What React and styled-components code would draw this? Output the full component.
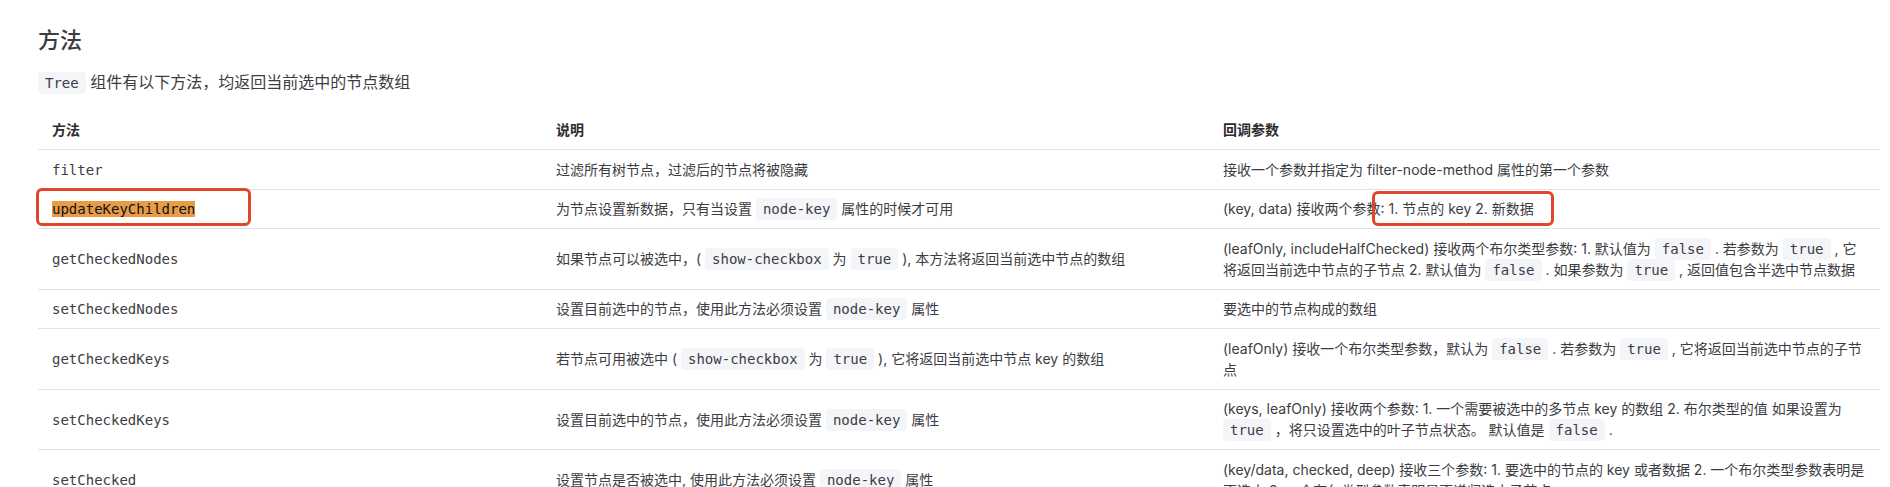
import React from 'react'
import styled, { createGlobalStyle } from 'styled-components'

const GlobalStyle = createGlobalStyle`
  html, body {
    margin: 0;
    padding: 0;
    background: #ffffff;
  }
  body {
    font-family: Inter, "Noto Sans CJK SC", sans-serif;
    color: #3c3c43;
  }
`

const Page = styled.div`
  position: relative;
  padding: 24px 10px 0 38px;
  height: 487px;
  box-sizing: border-box;
  overflow: hidden;
`

const Title = styled.h2`
  margin: 0;
  font-size: 22px;
  line-height: 32px;
  font-weight: 500;
  color: #3c3c43;
`

const Lead = styled.p`
  margin: 14px 0 0;
  font-size: 16px;
  line-height: 24px;
`

const Code = styled.code`
  font-family: "DejaVu Sans Mono", "Liberation Mono", monospace;
  font-size: 14px;
  line-height: 1;
  background: #f4f5f8;
  color: #3c3c43;
  border-radius: 4px;
  padding: 3px 7px;
`

const Table = styled.table`
  margin-top: 16px;
  width: 1842px;
  border-collapse: collapse;
  table-layout: fixed;
  font-size: 14px;
`

const Th = styled.th`
  text-align: left;
  font-weight: 600;
  color: #2c2c30;
  padding: 9px 14px;
  line-height: 21px;
  border-bottom: 1px solid #e0e2e8;
`

const Td = styled.td`
  padding: 8.75px 14px;
  line-height: 21px;
  vertical-align: middle;
  border-bottom: 1px solid #e0e2e8;
`

const Method = styled.span`
  font-family: "DejaVu Sans Mono", "Liberation Mono", monospace;
  font-size: 14px;
  line-height: 1;
  color: ${({ $marked }) => ($marked ? '#111111' : '#3c3c43')};
  background: ${({ $marked }) => ($marked ? '#e99c48' : 'transparent')};
`

const Callout = styled.div`
  position: absolute;
  border: 3px solid #e0462a;
  border-radius: 6px;
  box-sizing: border-box;
  pointer-events: none;
`

const rows = [
  {
    name: 'filter',
    desc: <>过滤所有树节点，过滤后的节点将被隐藏</>,
    args: <>接收一个参数并指定为 filter-node-method 属性的第一个参数</>,
  },
  {
    name: 'updateKeyChildren',
    marked: true,
    desc: <>为节点设置新数据，只有当设置 <Code>node-key</Code> 属性的时候才可用</>,
    args: <>(key, data) 接收两个参数: 1. 节点的 key 2. 新数据</>,
  },
  {
    name: 'getCheckedNodes',
    desc: <>如果节点可以被选中，( <Code>show-checkbox</Code> 为 <Code>true</Code> ), 本方法将返回当前选中节点的数组</>,
    args: (
      <>
        (leafOnly, includeHalfChecked) 接收两个布尔类型参数: 1. 默认值为 <Code>false</Code> . 若参数为{' '}
        <Code>true</Code> , 它将返回当前选中节点的子节点 2. 默认值为 <Code>false</Code> . 如果参数为{' '}
        <Code>true</Code> , 返回值包含半选中节点数据
      </>
    ),
  },
  {
    name: 'setCheckedNodes',
    desc: <>设置目前选中的节点，使用此方法必须设置 <Code>node-key</Code> 属性</>,
    args: <>要选中的节点构成的数组</>,
  },
  {
    name: 'getCheckedKeys',
    desc: <>若节点可用被选中 ( <Code>show-checkbox</Code> 为 <Code>true</Code> ), 它将返回当前选中节点 key 的数组</>,
    args: (
      <>
        (leafOnly) 接收一个布尔类型参数，默认为 <Code>false</Code> . 若参数为 <Code>true</Code> , 它将返回当前选中节点的子节点
      </>
    ),
  },
  {
    name: 'setCheckedKeys',
    desc: <>设置目前选中的节点，使用此方法必须设置 <Code>node-key</Code> 属性</>,
    args: (
      <>
        (keys, leafOnly) 接收两个参数: 1. 一个需要被选中的多节点 key 的数组 2. 布尔类型的值 如果设置为{' '}
        <Code>true</Code> ，将只设置选中的叶子节点状态。 默认值是 <Code>false</Code> .
      </>
    ),
  },
  {
    name: 'setChecked',
    desc: <>设置节点是否被选中, 使用此方法必须设置 <Code>node-key</Code> 属性</>,
    args: (
      <>
        (key/data, checked, deep) 接收三个参数: 1. 要选中的节点的 key 或者数据 2. 一个布尔类型参数表明是否选中 3.
        一个布尔类型参数表明是否递归选中子节点
      </>
    ),
  },
]

const App = () => {
  return (
    <>
      <GlobalStyle />
      <Page>
        <Title>方法</Title>
        <Lead>
          <Code>Tree</Code> 组件有以下方法，均返回当前选中的节点数组
        </Lead>
        <Table>
          <colgroup>
            <col style={{ width: '504px' }} />
            <col style={{ width: '667px' }} />
            <col />
          </colgroup>
          <thead>
            <tr>
              <Th>方法</Th>
              <Th>说明</Th>
              <Th>回调参数</Th>
            </tr>
          </thead>
          <tbody>
            {rows.map((row) => (
              <tr key={row.name}>
                <Td>
                  <Method $marked={row.marked}>{row.name}</Method>
                </Td>
                <Td>{row.desc}</Td>
                <Td>{row.args}</Td>
              </tr>
            ))}
          </tbody>
        </Table>
        <Callout style={{ left: 36, top: 188, width: 215, height: 38 }} />
        <Callout style={{ left: 1372, top: 191, width: 182, height: 35 }} />
      </Page>
    </>
  )
}

export default App
